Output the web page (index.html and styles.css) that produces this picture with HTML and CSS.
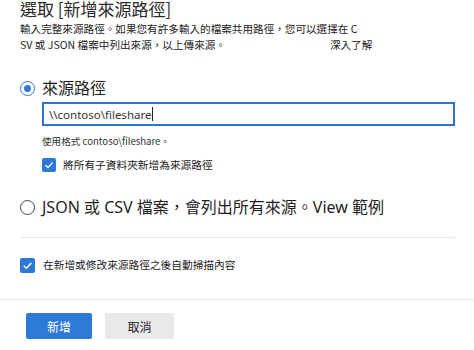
FILE: index.html
```html
<!DOCTYPE html>
<html lang="zh-Hant">
<head>
<meta charset="utf-8">
<link rel="stylesheet" href="styles.css">
</head>
<body>
<div class="panel">
  <h1 class="title">選取 [新增來源路徑]</h1>
  <p class="desc">輸入完整來源路徑。如果您有許多輸入的檔案共用路徑，您可以選擇在 C<br>SV 或 JSON 檔案中列出來源，以上傳來源。<span class="learn">深入了解</span></p>

  <div class="option opt-first">
    <span class="radio checked"></span>
    <span class="option-label">來源路徑</span>
  </div>
  <div class="sub">
    <div class="input"><span class="input-text">\\contoso\fileshare</span><span class="caret"></span></div>
    <p class="hint">使用格式 contoso\fileshare。</p>
    <div class="check-row sub-check">
      <span class="checkbox"><svg viewBox="0 0 14 14" width="14" height="14"><path d="M3.5 7.2 L6 9.6 L10.6 4.6" fill="none" stroke="#fff" stroke-width="1.4"/></svg></span>
      <span class="check-label">將所有子資料夾新增為來源路徑</span>
    </div>
  </div>

  <div class="option opt-second">
    <span class="radio"></span>
    <span class="option-label">JSON 或 CSV 檔案，會列出所有來源。View 範例</span>
  </div>

  <hr class="divider">

  <div class="check-row auto-check">
    <span class="checkbox"><svg viewBox="0 0 14 14" width="15" height="15"><path d="M3.5 7.2 L6 9.6 L10.6 4.6" fill="none" stroke="#fff" stroke-width="1.4"/></svg></span>
    <span class="check-label">在新增或修改來源路徑之後自動掃描內容</span>
  </div>
</div>
<hr class="footer-line">
<div class="footer">
  <button class="btn primary">新增</button>
  <button class="btn secondary">取消</button>
</div>
</body>
</html>
```

FILE: styles.css
```css
* { box-sizing: border-box; }
html, body { margin: 0; padding: 0; background: #fff; }
body {
  font-family: "Noto Sans", "Noto Sans CJK TC", sans-serif;
  color: #252525;
  width: 474px;
  height: 350px;
  overflow: hidden;
}
.panel { padding: 0 19px 0 20px; }
.title {
  margin: 0;
  font-family: "Noto Sans CJK TC", sans-serif;
  font-weight: 400;
  font-size: 17px;
  line-height: 18px;
  color: #2a2a2a;
}
.desc {
  margin: 3px 0 0;
  font-family: "Noto Sans CJK TC", sans-serif;
  font-size: 10.6px;
  line-height: 16px;
  color: #222;
}
.learn { margin-left: 104px; }
.option {
  display: flex;
  align-items: center;
  height: 20px;
}
.opt-first { margin-top: 25px; }
.opt-second { margin-top: 24px; }
.radio {
  width: 15px;
  height: 15px;
  border-radius: 50%;
  border: 1px solid #444;
  flex: none;
  position: relative;
  margin-right: 7px;
}
.radio.checked { border-color: #2d7ad6; }
.radio.checked::after {
  content: "";
  position: absolute;
  left: 3px; top: 3px;
  width: 7px; height: 7px;
  border-radius: 50%;
  background: #2d7ad6;
}
.option-label {
  font-family: "Noto Sans", "Noto Sans CJK TC", sans-serif;
  font-size: 16px;
  line-height: 20px;
  color: #1e1e1e;
}
.sub { padding-left: 22px; }
.input {
  margin-top: 4px;
  height: 24px;
  border: 2px solid #2d72d2;
  display: flex;
  align-items: center;
  padding-left: 5px;
  font-size: 11.5px;
  color: #333;
}
.caret {
  width: 1px;
  height: 14px;
  background: #222;
  margin-left: 1px;
}
.hint {
  margin: 8px 0 0;
  font-family: "Noto Sans CJK TC", sans-serif;
  font-size: 9.6px;
  line-height: 14px;
  color: #333;
}
.check-row {
  display: flex;
  align-items: center;
  height: 16px;
}
.sub-check { margin-top: 9px; }
.checkbox {
  width: 14px;
  height: 14px;
  border-radius: 2px;
  background: #2d7ad6;
  flex: none;
  display: flex;
  align-items: center;
  justify-content: center;
  margin-right: 7px;
}
.auto-check .checkbox { width: 15px; height: 15px; margin-right: 8px; }
.check-label {
  font-family: "Noto Sans CJK TC", sans-serif;
  font-size: 10.7px;
  line-height: 16px;
  color: #222;
}
.divider {
  margin: 20px 0 0;
  border: 0;
  height: 1px;
  background: #e8e8e8;
}
.auto-check { margin-top: 19px; }
.footer-line {
  margin: 26px 0 0;
  border: 0;
  height: 1px;
  background: #ececec;
}
.footer {
  display: flex;
  gap: 13px;
  padding: 13px 0 0 26px;
}
.btn {
  height: 26px;
  border: 0;
  border-radius: 2px;
  font-family: "Noto Sans CJK TC", sans-serif;
  font-size: 12px;
  padding: 0;
}
.primary { width: 66px; background: #2d7ad6; color: #fff; }
.secondary { width: 69px; background: #e9e9e9; color: #222; }
```
